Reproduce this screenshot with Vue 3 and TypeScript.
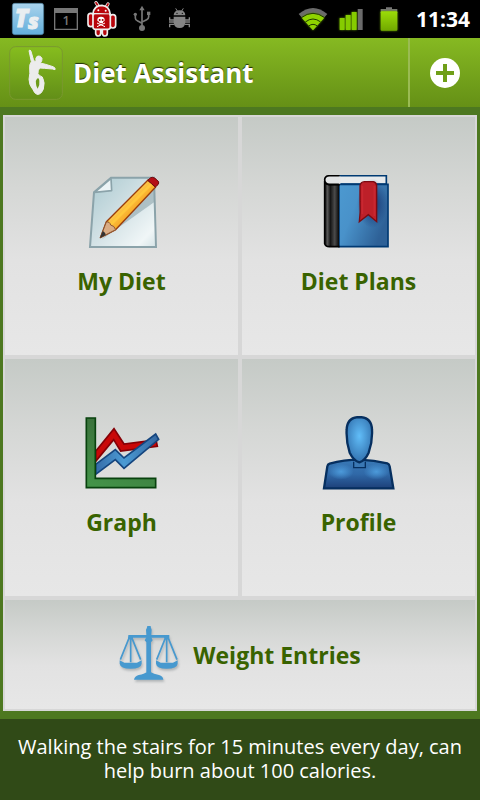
<script setup lang="ts">
import { ref } from 'vue'

type TileId = 'diet' | 'plans' | 'graph' | 'profile'

interface Tile {
  id: TileId
  label: string
}

const tiles: Tile[] = [
  { id: 'diet', label: 'My Diet' },
  { id: 'plans', label: 'Diet Plans' },
  { id: 'graph', label: 'Graph' },
  { id: 'profile', label: 'Profile' },
]

const clock = ref('11:34')
const tip = ref('Walking the stairs for 15 minutes every day, can help burn about 100 calories.')
</script>

<template>
  <div class="screen">
    <div class="status">
      <div class="status-group">
        <svg viewBox="27 0 114 114" aria-hidden="true">
          <defs>
            <linearGradient id="ts-bg" x1="0" y1="0" x2="0" y2="1">
              <stop offset="0" stop-color="#a9d3ec" />
              <stop offset="1" stop-color="#62aedb" />
            </linearGradient>
          </defs>
          <rect x="37" y="10" width="94" height="94" rx="7" fill="url(#ts-bg)" stroke="#4a7d9c" stroke-width="2" />
          <text x="44" y="80" class="ts-big">T</text>
          <text x="84" y="86" class="ts-small">s</text>
        </svg>
        <svg viewBox="141 0 114 114" aria-hidden="true">
          <path d="M164 26H232V88H164Z" fill="none" stroke="#777" stroke-width="4" />
          <path d="M162 24H234V39H162Z" fill="#777" />
          <text x="198" y="76" class="cal-day">1</text>
        </svg>
        <svg viewBox="255 0 114 114" aria-hidden="true">
          <g fill="#b8050b" stroke="#eee" stroke-width="5" stroke-linejoin="round">
            <path d="M288 8L296 20M324 12L318 22" stroke-width="10" stroke-linecap="round" />
            <path d="M288 8L296 20M324 12L318 22" stroke="#b8050b" stroke-linecap="round" />
            <rect x="264" y="40" width="17" height="40" rx="8" />
            <rect x="330" y="44" width="17" height="40" rx="8" />
            <path d="M287 76V100Q288 108 295 108Q302 108 302 100V85M307 85V100Q308 108 315 108Q322 108 322 100V80" />
            <path d="M279 43H331V82Q331 88 323 88H287Q279 88 279 82Z" />
            <path d="M279 41Q282 16 306 16Q328 18 331 43Z" />
          </g>
          <path d="M283 43H327V82H283Z" fill="#b8050b" />
          <g fill="#fff">
            <circle cx="295" cy="31" r="3" /><circle cx="317" cy="32" r="3" />
            <path d="M292 62Q291 50 303 50Q315 50 314 62L309 66V70H298V66Z" />
            <path d="M291 69L315 80M315 69L291 80" stroke="#fff" stroke-width="3" />
          </g>
          <circle cx="299" cy="60" r="3" fill="#900" /><circle cx="308" cy="60" r="3" fill="#900" />
        </svg>
        <svg viewBox="369 0 114 114" aria-hidden="true">
          <g fill="none" stroke="#777" stroke-width="5">
            <path d="M426 26V84M406 44V54Q406 60 412 62L426 70M446 40V50Q446 56 440 59L426 66" />
          </g>
          <g fill="#777">
            <path d="M426 17L434 31H418Z" />
            <circle cx="426" cy="84" r="9" />
            <circle cx="406" cy="43" r="5" />
            <path d="M441 35H451V45H441Z" />
          </g>
        </svg>
        <svg viewBox="483 0 114 114" aria-hidden="true">
          <g fill="#858585">
            <path d="M521 46Q522 31 539 31Q555 31 556 46Z" />
            <path d="M521 50H556V68Q554 84 539 84Q523 84 521 68Z" />
          </g>
          <g fill="none" stroke="#858585" stroke-width="4">
            <path d="M527 25L532 33M550 25L545 33" stroke-width="3" />
            <path d="M522 60H509V52M522 66H507M522 73H509V82M555 60H568V52M555 66H570M555 73H568V82" />
          </g>
          <circle cx="531" cy="40" r="2" fill="#000" /><circle cx="547" cy="40" r="2" fill="#000" />
        </svg>
      </div>
      <div class="status-group">
        <svg viewBox="164 0 114 114" aria-hidden="true">
          <path d="M221 90L178 42Q221 6 264 42Z" fill="#6b6b6b" />
          <path d="M221 91L187 53Q221 28 255 53Z" fill="#8fd400" class="glow" />
          <g fill="none" stroke="#203800" stroke-width="3">
            <path d="M186 53Q221 27 256 53M198 66Q221 48 244 66M208 78Q221 68 234 78" />
          </g>
        </svg>
        <svg viewBox="277 0 114 114" aria-hidden="true">
          <path d="M354 27H369V90H354Z" fill="#6b6b6b" />
          <path d="M300 54H315V90H300ZM318 45H333V90H318ZM336 36H351V90H336Z" fill="#86cc00" class="glow" />
        </svg>
        <svg viewBox="390 0 114 114" aria-hidden="true">
          <defs>
            <linearGradient id="batt" x1="0" y1="0" x2="0" y2="1">
              <stop offset="0" stop-color="#9bdc08" />
              <stop offset="1" stop-color="#71a800" />
            </linearGradient>
          </defs>
          <path d="M438 22H456V27H472V38H422V27H438Z" fill="#777" />
          <rect x="422" y="34" width="50" height="58" rx="3" fill="url(#batt)" class="glow" />
        </svg>
        <time class="clock">{{ clock }}</time>
      </div>
    </div>

    <header class="header">
      <svg class="logo" viewBox="28 30 162 162" aria-hidden="true">
        <defs>
          <linearGradient id="logo-bg" x1="0" y1="0" x2="0" y2="1">
            <stop offset="0" stop-color="#86bd1e" />
            <stop offset="1" stop-color="#628e18" />
          </linearGradient>
        </defs>
        <rect x="30" y="32" width="158" height="158" rx="18" fill="url(#logo-bg)" stroke="#7a9830" stroke-width="3" />
        <path d="M88 44Q91 39 94 46L101 70Q104 79 109 77Q106 64 114 60Q123 58 127 67Q128 75 122 81L138 85L160 92Q169 96 166 101L158 99L134 97L120 96Q114 104 115 113Q119 120 128 123Q137 140 131 159Q124 177 112 175Q104 172 100 161Q88 147 88 130Q92 112 90 96Q89 85 95 77Z" fill="#ececec" stroke="#ececec" stroke-width="3" stroke-linejoin="round" />
        <path d="M112 128Q118 124 119 134Q121 148 114 158Q109 151 109 143Q107 133 112 128Z" fill="#6d9b1a" />
      </svg>
      <h1 class="title">Diet Assistant</h1>
      <button class="add" type="button" aria-label="Add">
        <svg viewBox="0 0 30 30" aria-hidden="true">
          <circle cx="15" cy="15" r="15" fill="#fff" />
          <path d="M15 6V24M6 15H24" stroke="#6f9f18" stroke-width="4" />
        </svg>
      </button>
    </header>

    <main class="main">
      <nav class="grid">
        <button v-for="tile in tiles" :key="tile.id" class="tile" type="button">
          <svg v-if="tile.id === 'diet'" class="icon" viewBox="36 30 240 222" aria-hidden="true">
            <defs>
              <linearGradient id="paper" x1="0" y1="0" x2="1" y2="1">
                <stop offset="0" stop-color="#a9c9d0" />
                <stop offset="0.45" stop-color="#cfdfe3" />
                <stop offset="0.85" stop-color="#f0f6f7" />
                <stop offset="1" stop-color="#d5e3e6" />
              </linearGradient>
              <linearGradient id="pencil" x1="0" y1="0" x2="1" y2="1">
                <stop offset="0.35" stop-color="#ffd65a" />
                <stop offset="0.65" stop-color="#f59a14" />
              </linearGradient>
            </defs>
            <path d="M123 38H252L258 246H60L72 82Z" fill="url(#paper)" stroke="#8ba3aa" stroke-width="6" />
            <path d="M123 40L125 77L74 82Z" fill="#edf5f7" stroke="#8ba3aa" stroke-width="5" stroke-linejoin="round" />
            <path d="M94 224L252 112V68L118 200Z" fill="#8ea5ac" opacity="0.6" />
            <path d="M109 170L234 45L257 66L136 195L91 218Z" fill="url(#pencil)" stroke="#9a3d0c" stroke-width="4" stroke-linejoin="round" />
            <path d="M123 178L246 55" stroke="#ffc83c" stroke-width="8" />
            <path d="M109 171Q119 169 122 180Q133 182 137 194L91 218Z" fill="#d9ac84" stroke="#8c5630" stroke-width="3" />
            <path d="M98 199Q104 199 107 210L90 219Z" fill="#333" />
            <path d="M233 46L242 38Q248 35 255 40L265 49Q268 54 264 59L256 66Z" fill="#b50f16" stroke="#6c0c10" stroke-width="3" />
          </svg>

          <svg v-else-if="tile.id === 'plans'" class="icon" viewBox="74 30 240 222" aria-hidden="true">
            <defs>
              <linearGradient id="cover" x1="0" y1="0" x2="1" y2="0.5">
                <stop offset="0" stop-color="#4c99d0" />
                <stop offset="0.4" stop-color="#4992ca" />
                <stop offset="1" stop-color="#2e6197" />
              </linearGradient>
              <linearGradient id="spine" x1="0" y1="0" x2="1" y2="0">
                <stop offset="0" stop-color="#111" />
                <stop offset="0.2" stop-color="#555" />
                <stop offset="0.4" stop-color="#151515" />
                <stop offset="0.7" stop-color="#4b4b4b" />
                <stop offset="1" stop-color="#080808" />
              </linearGradient>
              <radialGradient id="ribbon-shade">
                <stop offset="0" stop-color="#14306d" />
                <stop offset="1" stop-color="#14306d" stop-opacity="0" />
              </radialGradient>
            </defs>
            <path d="M134 32H276V57H134Z" fill="#e7eaec" stroke="#003a73" stroke-width="5" />
            <path d="M134 58H281V245H134Z" fill="url(#cover)" stroke="#003a73" stroke-width="5" />
            <ellipse cx="234" cy="115" rx="46" ry="74" fill="url(#ribbon-shade)" />
            <path d="M134 59H103Q91 56 91 48V236Q93 245 105 245H134Z" fill="url(#spine)" />
            <path d="M136 59H103Q91 56 91 48V236Q93 245 105 245H136" fill="none" stroke="#000" stroke-width="5" />
            <path d="M136 32H105Q91 33 91 45Q92 57 105 58H136" fill="#e2e4e5" stroke="#000" stroke-width="5" />
            <path d="M136 35V56" stroke="#e4e6e7" stroke-width="5" />
            <path d="M197 62Q199 51 210 50H237Q246 52 247 62V170L222 149L195 170Q199 140 197 110Z" fill="#bd2029" stroke="#7b0a12" stroke-width="4" />
            <path d="M204 62V147M240 62V153" stroke="#d12d36" stroke-width="5" opacity="0.6" />
          </svg>

          <svg v-else-if="tile.id === 'graph'" class="icon" viewBox="36 33 240 222" aria-hidden="true">
            <defs>
              <linearGradient id="axis" x1="0.6" y1="0" x2="0.2" y2="1">
                <stop offset="0" stop-color="#386a38" />
                <stop offset="1" stop-color="#439348" />
              </linearGradient>
              <linearGradient id="line-blue" x1="0" y1="0" x2="1" y2="0">
                <stop offset="0" stop-color="#366ca8" />
                <stop offset="0.45" stop-color="#4b9bd4" />
                <stop offset="1" stop-color="#34669f" />
              </linearGradient>
            </defs>
            <path d="M77 139L132 71L162 117L258 105L262 124L152 138L131 104L77 169Z" fill="#c90808" stroke="#850006" stroke-width="5" />
            <path d="M77 178L136 134L162 159L257 87L266 103L162 190L136 164L77 208Z" fill="url(#line-blue)" stroke="#15457e" stroke-width="5" />
            <path d="M49 39H76V220H257V248H49Z" fill="url(#axis)" stroke="#08420e" stroke-width="5" />
          </svg>

          <svg v-else class="icon" viewBox="43 33 240 222" aria-hidden="true">
            <defs>
              <radialGradient id="face" cx="0.5" cy="0.42" r="0.55">
                <stop offset="0" stop-color="#61bdf8" />
                <stop offset="1" stop-color="#3576b3" />
              </radialGradient>
              <linearGradient id="torso" x1="0" y1="0" x2="0" y2="1">
                <stop offset="0" stop-color="#3979b6" />
                <stop offset="0.5" stop-color="#3069a8" />
                <stop offset="1" stop-color="#1d4079" />
              </linearGradient>
              <radialGradient id="shoulder">
                <stop offset="0" stop-color="#4c9ada" />
                <stop offset="1" stop-color="#4c9ada" stop-opacity="0" />
              </radialGradient>
            </defs>
            <path d="M58 250L68 184Q69 178 75 176Q118 164 164 164Q209 166 248 175Q254 177 255 184L266 250Z" fill="url(#torso)" stroke="#062f5f" stroke-width="7" />
            <ellipse cx="109" cy="200" rx="38" ry="24" fill="url(#shoulder)" />
            <ellipse cx="215" cy="200" rx="38" ry="24" fill="url(#shoulder)" />
            <path d="M147 170V188H182V170" fill="#3a78b4" stroke="#062f5f" stroke-width="4" />
            <path d="M164 36Q201 37 202 74Q204 109 192 143Q181 167 164 172Q147 167 135 143Q124 109 126 74Q127 37 164 36Z" fill="url(#face)" stroke="#062f5f" stroke-width="7" />
          </svg>
          <span class="label">{{ tile.label }}</span>
        </button>

        <button class="tile tile-wide" type="button">
          <svg class="icon-scale" viewBox="40 108 180 177" aria-hidden="true">
            <g fill="#4799cf" stroke="#4799cf">
              <path d="M68 138H191V146H68Z" stroke="none" />
              <path d="M122 272V160L117 154L122 145V136L121 122Q124 117 125 111H135Q135 116 138 122L137 136V145L141 154L136 160V250Q143 255 160 258Q172 262 173 272H85Q87 261 99 258Q117 255 122 250Z" stroke="none" />
              <path d="M71 145L44 212M78 145L105 212M75 145V220M180 145L153 212M187 145L214 212M183 145V220" fill="none" stroke-width="5" />
              <path d="M42 214L56 221H94L108 214V224Q106 239 75 239Q44 239 42 224ZM151 214L165 221H202L216 214V224Q214 239 183 239Q153 239 151 224Z" stroke="none" />
              <circle cx="75" cy="145" r="7" stroke="none" />
              <circle cx="183" cy="145" r="7" stroke="none" />
            </g>
          </svg>
          <span class="label">Weight Entries</span>
        </button>
      </nav>
    </main>

    <footer class="tip">{{ tip }}</footer>
  </div>
</template>

<style>
body {
  margin: 0;
}
</style>

<style scoped>
.screen {
  display: flex;
  flex-direction: column;
  min-height: 100vh;
  background: #4d7820;
  font-family: 'Open Sans', 'Noto Sans', sans-serif;
}

button {
  margin: 0;
  padding: 0;
  border: 0;
  font: inherit;
  cursor: pointer;
}

svg {
  display: block;
  flex: none;
}

.status {
  display: flex;
  justify-content: space-between;
  height: 38px;
  padding: 0 10px 0 9px;
  background: #000;
}

.status-group {
  display: flex;
  align-items: center;
}

.status-group svg {
  width: 38px;
  height: 38px;
}

.glow {
  filter: drop-shadow(0 0 3px #5f9400);
}

.ts-big,
.ts-small {
  fill: #e9eef1;
  stroke: #e9eef1;
  stroke-width: 3px;
  font-size: 72px;
  font-weight: 800;
  font-style: italic;
}

.ts-small {
  font-size: 64px;
}

.cal-day {
  fill: #777;
  font-size: 38px;
  font-weight: 600;
  text-anchor: middle;
}

.clock {
  margin-left: 8px;
  color: #fff;
  font-size: 21px;
  font-weight: 700;
  line-height: 38px;
}

.header {
  display: flex;
  align-items: center;
  height: 69px;
  padding-left: 9px;
  background: linear-gradient(#86b922, #659016);
}

.logo {
  width: 54px;
  height: 54px;
}

.title {
  flex: 1;
  margin: 0 0 0 10px;
  color: #fff;
  font-size: 26px;
  font-weight: 700;
  line-height: 36px;
  text-shadow: 0 -1px 1px #1e2e06;
}

.add {
  display: flex;
  align-items: center;
  justify-content: center;
  align-self: stretch;
  width: 72px;
  border-left: 2px solid #9abb53;
  background: none;
}

.add svg {
  width: 30px;
  height: 30px;
}

.main {
  display: flex;
  flex: 1;
  padding: 8px 3px;
}

.grid {
  display: grid;
  flex: 1;
  grid-template-columns: 1fr 1fr;
  grid-template-rows: 1fr 1fr auto;
  gap: 4px;
  padding: 2px;
  background: #d7d7d7;
}

.tile {
  display: flex;
  flex-direction: column;
  align-items: center;
  justify-content: center;
  gap: 16px;
  background: linear-gradient(#c5cac6, #d5d7d5 30%, #e2e2e2 60%, #e7e7e7);
}

.tile-wide {
  grid-column: 1 / -1;
  flex-direction: row;
  gap: 14px;
  padding: 25px 0;
}

.icon {
  width: 80px;
  height: 74px;
}

.icon-scale {
  width: 60px;
  height: 59px;
  filter: drop-shadow(1px 2px 1px #b0b4b6);
}

.label {
  color: #396300;
  font-size: 23px;
  font-weight: 700;
  line-height: 32px;
}

.tip {
  padding: 16px 16px 17px;
  background: #304a17;
  color: #fff;
  font-size: 20px;
  line-height: 24px;
  text-align: center;
}
</style>
